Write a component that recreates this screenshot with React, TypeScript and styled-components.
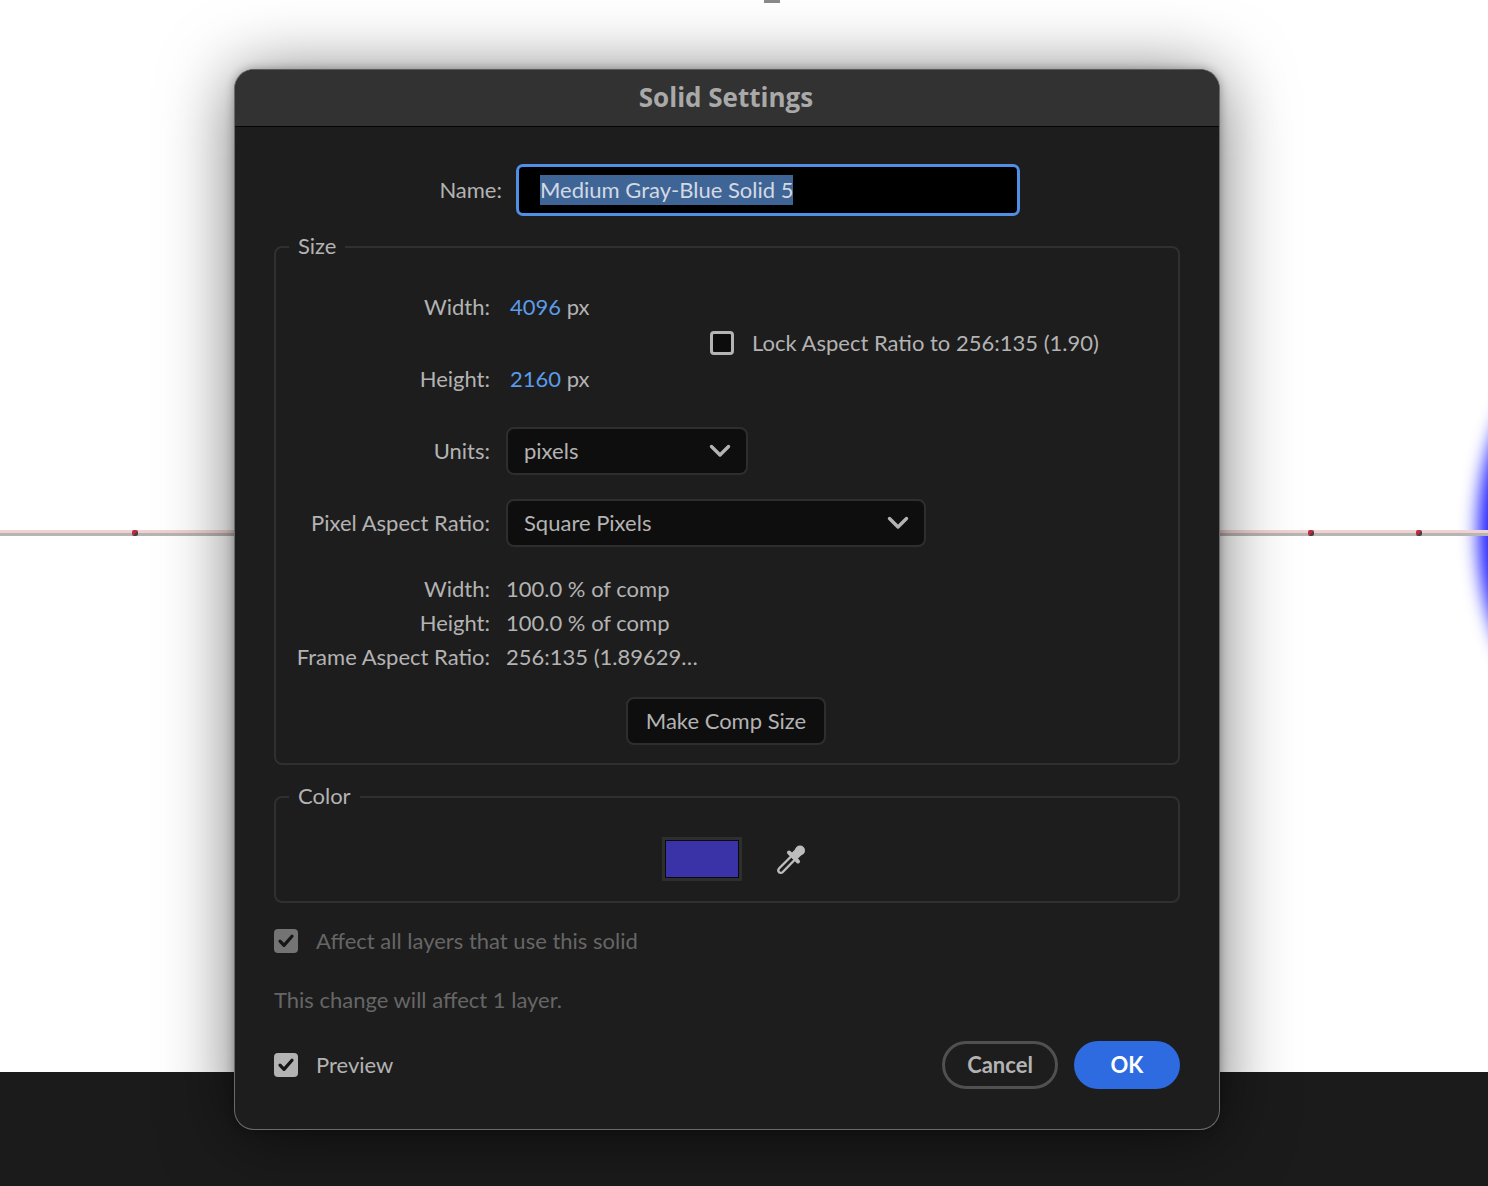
import React from "react";
import styled, { createGlobalStyle } from "styled-components";

const GlobalStyle = createGlobalStyle`
  html, body {
    margin: 0;
    padding: 0;
    background: #fff;
  }
  body {
    font-family: "Lato", "Liberation Sans", sans-serif;
  }
`;

const Stage = styled.div`
  position: relative;
  width: 1488px;
  height: 1186px;
  overflow: hidden;
  background: #fff;
  display: flex;
  flex-direction: column;
`;

const Canvas = styled.div`
  position: relative;
  flex: 1;
  background: #fff;
`;

const BottomBand = styled.div`
  height: 114px;
  flex: none;
  position: relative;
  background: #1b1b1b;
`;

const TopTick = styled.div`
  position: absolute;
  left: 764px;
  top: 0;
  width: 16px;
  height: 3px;
  background: #8a8a8a;
`;

const GuideLine = styled.div`
  position: absolute;
  left: 0;
  right: 0;
  top: 530px;
  height: 6px;
  background: linear-gradient(to bottom, #f0d3d3 0, #efd0d0 50%, #b9b4b4 50%, #b9b4b4 100%);
`;

const GuideDot = styled.span<{ x: number }>`
  position: absolute;
  left: ${(props) => props.x}px;
  top: 0;
  width: 6px;
  height: 6px;
  border-radius: 2px;
  background: linear-gradient(135deg, #c0293f 0, #c0293f 55%, #4a4144 55%, #4a4144 100%);
`;

const GlowCircle = styled.div`
  position: absolute;
  left: 1478px;
  top: 232px;
  width: 600px;
  height: 600px;
  border-radius: 50%;
  background: #1f1fff;
  filter: blur(9px);
`;

const Dialog = styled.div`
  position: absolute;
  left: 234px;
  top: 69px;
  width: 986px;
  height: 1061px;
  box-sizing: border-box;
  border: 1px solid #6b6b6b;
  border-top-color: #5a5a5a;
  border-radius: 20px;
  background: #1d1d1d;
  box-shadow: 0 6px 70px rgba(0, 0, 0, 0.55), 0 0 10px rgba(0, 0, 0, 0.3);
  overflow: hidden;
  display: flex;
  flex-direction: column;
`;

const TitleBar = styled.div`
  height: 57px;
  box-sizing: border-box;
  flex: none;
  display: flex;
  align-items: center;
  justify-content: center;
  padding: 0 2px 3px 0;
  background: #323232;
  border-bottom: 1px solid #050505;
  color: #a9a9a9;
  font-family: "Open Sans", "Liberation Sans", sans-serif;
  font-size: 26px;
  font-weight: 700;
`;

const Body = styled.div`
  flex: 1;
  padding: 37px 39px 0;
  display: flex;
  flex-direction: column;
  color: #b3b3b3;
  font-size: 22px;
  line-height: 26px;
`;

const NameRow = styled.div`
  display: flex;
  align-items: center;
  justify-content: flex-end;
  gap: 14px;
  padding-right: 160px;
`;

const NameInput = styled.div`
  width: 504px;
  height: 52px;
  box-sizing: border-box;
  border: 3px solid #4f8fe6;
  border-radius: 7px;
  background: #000;
  padding-left: 21px;
  display: flex;
  align-items: center;
`;

const Selected = styled.span`
  background: #3f6597;
  color: #d3d9e2;
  line-height: 30px;
`;

const Group = styled.fieldset`
  margin: 0;
  padding: 0;
  border: 2px solid #303030;
  border-radius: 8px;
  min-width: 0;
`;

const SizeGroup = styled(Group)`
  margin-top: 17px;
  padding: 22px 0 18px;
`;

const ColorGroup = styled(Group)`
  margin-top: 18px;
  height: 120px;
  box-sizing: border-box;
`;

const ColorRow = styled.div`
  height: 90px;
  box-sizing: border-box;
  display: flex;
  align-items: center;
  justify-content: center;
  padding: 6px 0 0 14px;
  gap: 34px;
`;

const Legend = styled.legend`
  margin-left: 13px;
  padding: 0 9px;
  line-height: 26px;
  height: 28px;
  color: #b3b3b3;
`;

const Label = styled.div`
  text-align: right;
  white-space: nowrap;
`;

const SizeTop = styled.div`
  display: flex;
  align-items: center;
  margin-bottom: 24px;
`;

const DimGrid = styled.div`
  width: 434px;
  display: grid;
  grid-template-columns: 214px 1fr;
  grid-auto-rows: 48px;
  row-gap: 24px;
  column-gap: 16px;
  align-items: center;
`;

const SelectGrid = styled.div`
  display: grid;
  grid-template-columns: 214px 1fr;
  grid-auto-rows: 48px;
  row-gap: 24px;
  column-gap: 16px;
  align-items: center;
  margin-bottom: 25px;
`;

const InfoGrid = styled.div`
  display: grid;
  grid-template-columns: 214px 1fr;
  grid-auto-rows: 34px;
  column-gap: 16px;
  align-items: center;
`;

const Value = styled.div`
  white-space: nowrap;
`;

const Editable = styled.span`
  color: #5b9be8;
  margin-left: 4px;
`;

const LockRow = styled.div`
  display: flex;
  align-items: center;
  gap: 18px;
  white-space: nowrap;
`;

const Select = styled.div<{ w: number }>`
  width: ${(props) => props.w}px;
  height: 48px;
  box-sizing: border-box;
  border: 2px solid #2e2e2e;
  border-radius: 8px;
  background: #0e0e0e;
  display: flex;
  align-items: center;
  justify-content: space-between;
  padding: 0 15px 0 16px;
`;

const Center = styled.div`
  display: flex;
  justify-content: center;
  margin-top: 23px;
  padding-right: 2px;
`;

const CompButton = styled.div`
  width: 200px;
  height: 48px;
  box-sizing: border-box;
  border: 2px solid #2e2e2e;
  border-radius: 8px;
  background: #0e0e0e;
  display: flex;
  align-items: center;
  justify-content: center;
`;

const Swatch = styled.div`
  width: 80px;
  height: 44px;
  box-sizing: border-box;
  border: 3px solid #2e2e2e;
  background: #3a33a8;
  box-shadow: inset 0 0 0 1px #0a0a0a;
`;

const CheckRow = styled.div<{ muted?: boolean }>`
  display: flex;
  align-items: center;
  gap: 18px;
  color: ${(props) => (props.muted ? "#666" : "#b3b3b3")};
`;

const Box = styled.div<{ tone: "off" | "muted" | "on" }>`
  width: 24px;
  height: 24px;
  box-sizing: border-box;
  flex: none;
  border-radius: 4px;
  display: flex;
  align-items: center;
  justify-content: center;
  background: ${(props) => (props.tone === "muted" ? "#747474" : props.tone === "on" ? "#b3b3b3" : "#0c0c0c")};
  border: ${(props) => (props.tone === "off" ? "3px solid #b3b3b3" : "none")};
`;

const AffectRow = styled(CheckRow)`
  margin-top: 25px;
`;

const Note = styled.div`
  margin-top: 33px;
  color: #666;
`;

const Footer = styled.div`
  margin-top: 28px;
  display: flex;
  align-items: center;
  justify-content: space-between;
`;

const Actions = styled.div`
  display: flex;
  gap: 16px;
`;

const PillButton = styled.div<{ primary?: boolean }>`
  height: 48px;
  width: ${(props) => (props.primary ? "106px" : "116px")};
  box-sizing: border-box;
  border-radius: 24px;
  display: flex;
  align-items: center;
  justify-content: center;
  font-weight: 700;
  background: ${(props) => (props.primary ? "#2e6be0" : "transparent")};
  border: ${(props) => (props.primary ? "none" : "3px solid #505050")};
  color: ${(props) => (props.primary ? "#fff" : "#b3b3b3")};
`;

function Chevron() {
  return (
    <svg width="22" height="14" viewBox="0 0 22 14" fill="none">
      <path d="M2.5 2.5 11 11l8.5-8.5" stroke="#b3b3b3" strokeWidth="3.4" strokeLinecap="round" strokeLinejoin="round" />
    </svg>
  );
}

function Check() {
  return (
    <svg width="18" height="16" viewBox="0 0 18 16" fill="none">
      <path d="M3 8.2 7 12.4 15 3.2" stroke="#161616" strokeWidth="3.2" strokeLinecap="round" strokeLinejoin="round" />
    </svg>
  );
}

function Eyedropper() {
  return (
    <svg width="30" height="31" viewBox="0 0 30 31" fill="none">
      <circle cx="24" cy="6.5" r="5" fill="#bdbdbd" />
      <path d="M13 8.5 22 17.5" stroke="#bdbdbd" strokeWidth="4" strokeLinecap="round" />
      <path d="M15.5 9 20 4.5 26 10.5 21.5 15z" fill="#bdbdbd" />
      <path
        d="M14.5 13 3 24.5c-1.6 1.6-.6 4.4 1.8 4.4.8 0 1.4-.3 2-.9L18 16.5"
        stroke="#bdbdbd"
        strokeWidth="2.4"
        strokeLinecap="round"
      />
    </svg>
  );
}

export default function App() {
  return (
    <Stage>
      <GlobalStyle />
      <Canvas>
        <TopTick />
        <GlowCircle />
        <GuideLine>
          <GuideDot x={132} />
          <GuideDot x={1308} />
          <GuideDot x={1416} />
        </GuideLine>
      </Canvas>
      <BottomBand />
      <Dialog>
        <TitleBar>Solid Settings</TitleBar>
        <Body>
          <NameRow>
            <span>Name:</span>
            <NameInput>
              <Selected>Medium Gray-Blue Solid 5</Selected>
            </NameInput>
          </NameRow>

          <SizeGroup>
            <Legend>Size</Legend>
            <SizeTop>
              <DimGrid>
                <Label>Width:</Label>
                <Value>
                  <Editable>4096</Editable> px
                </Value>
                <Label>Height:</Label>
                <Value>
                  <Editable>2160</Editable> px
                </Value>
              </DimGrid>
              <LockRow>
                <Box tone="off" />
                <span>Lock Aspect Ratio to 256:135 (1.90)</span>
              </LockRow>
            </SizeTop>
            <SelectGrid>
              <Label>Units:</Label>
              <Select w={242}>
                <span>pixels</span>
                <Chevron />
              </Select>
              <Label>Pixel Aspect Ratio:</Label>
              <Select w={420}>
                <span>Square Pixels</span>
                <Chevron />
              </Select>
            </SelectGrid>
            <InfoGrid>
              <Label>Width:</Label>
              <Value>100.0 % of comp</Value>
              <Label>Height:</Label>
              <Value>100.0 % of comp</Value>
              <Label>Frame Aspect Ratio:</Label>
              <Value>256:135 (1.89629…</Value>
            </InfoGrid>
            <Center>
              <CompButton>Make Comp Size</CompButton>
            </Center>
          </SizeGroup>

          <ColorGroup>
            <Legend>Color</Legend>
            <ColorRow>
              <Swatch />
              <Eyedropper />
            </ColorRow>
          </ColorGroup>

          <AffectRow muted>
            <Box tone="muted">
              <Check />
            </Box>
            <span>Affect all layers that use this solid</span>
          </AffectRow>
          <Note>This change will affect 1 layer.</Note>
          <Footer>
            <CheckRow>
              <Box tone="on">
                <Check />
              </Box>
              <span>Preview</span>
            </CheckRow>
            <Actions>
              <PillButton>Cancel</PillButton>
              <PillButton primary>OK</PillButton>
            </Actions>
          </Footer>
        </Body>
      </Dialog>
    </Stage>
  );
}
